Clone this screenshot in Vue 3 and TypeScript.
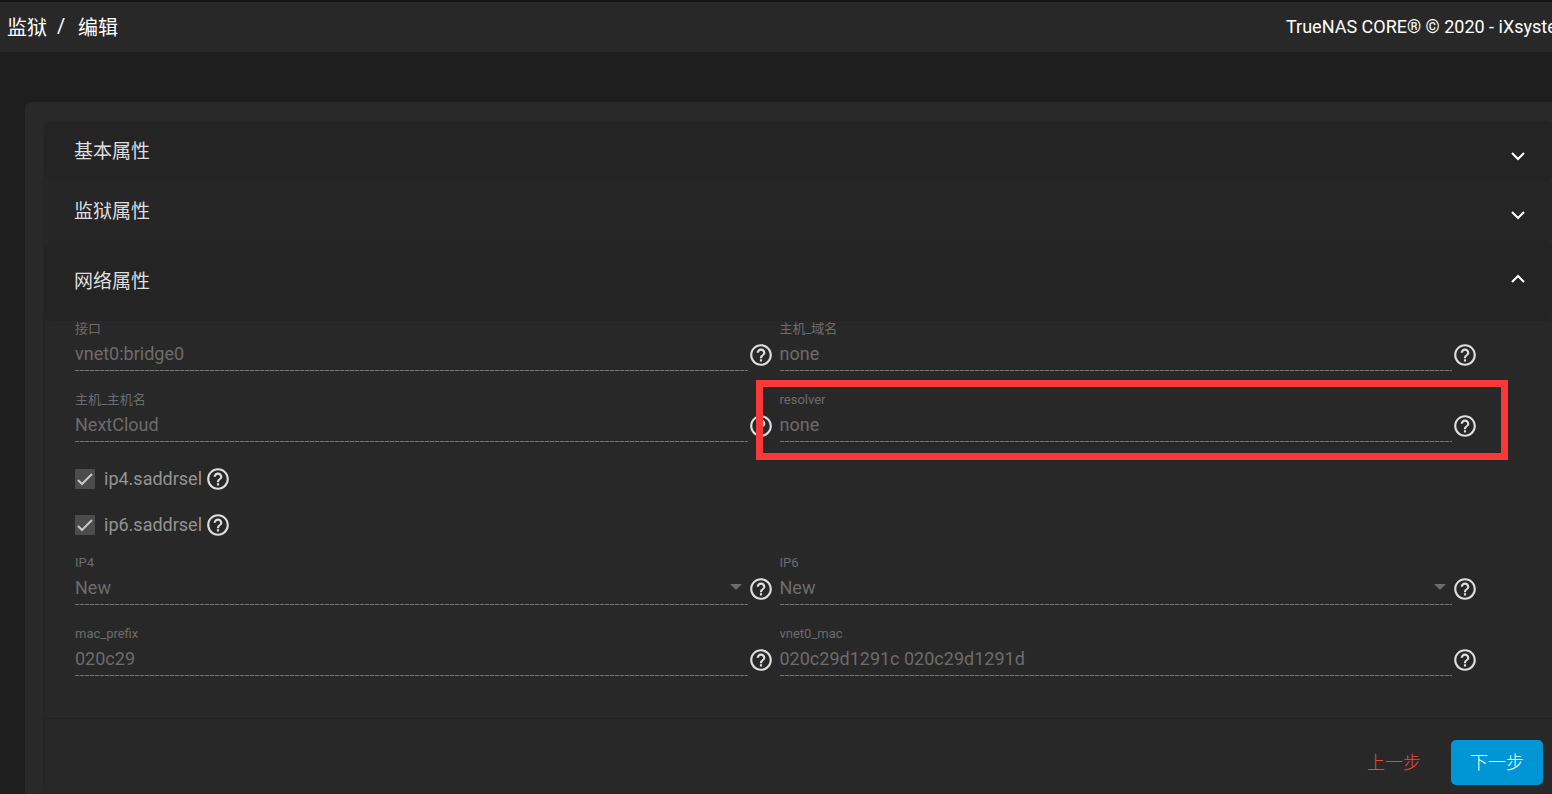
<script setup lang="ts">
interface Field {
  id: string
  label: string
  value: string
  select?: boolean
  marked?: boolean
}

const collapsed: string[] = ['基本属性', '监狱属性']

const hostFields: Field[] = [
  { id: 'interfaces', label: '接口', value: 'vnet0:bridge0' },
  { id: 'host_domainname', label: '主机_域名', value: 'none' },
  { id: 'host_hostname', label: '主机_主机名', value: 'NextCloud' },
  { id: 'resolver', label: 'resolver', value: 'none', marked: true },
]

const toggles: string[] = ['ip4.saddrsel', 'ip6.saddrsel']

const addressFields: Field[] = [
  { id: 'ip4', label: 'IP4', value: 'New', select: true },
  { id: 'ip6', label: 'IP6', value: 'New', select: true },
  { id: 'mac_prefix', label: 'mac_prefix', value: '020c29' },
  { id: 'vnet0_mac', label: 'vnet0_mac', value: '020c29d1291c 020c29d1291d' },
]

const groups = [hostFields, addressFields]

const helpPath =
  'M11 18h2v-2h-2v2zm1-16C6.480 2 2 6.480 2 12s4.480 10 10 10 10-4.480 10-10S17.520 2 12 2zm0 18c-4.410 0-8-3.590-8-8s3.590-8 8-8 8 3.590 8 8-3.590 8-8 8zm0-14c-2.210 0-4 1.790-4 4h2c0-1.100.9-2 2-2s2 .9 2 2c0 2-3 1.750-3 5h2c0-2.250 3-2.500 3-5 0-2.210-1.790-4-4-4z'
</script>

<template>
  <div class="page">
    <header class="topbar">
      <nav class="crumbs">
        <a href="#">监狱</a>
        <span class="slash">/</span>
        <a href="#">编辑</a>
      </nav>
      <span class="copyright">TrueNAS CORE® © 2020 - iXsystems</span>
    </header>

    <main class="card">
      <form class="panels" @submit.prevent>
        <button v-for="title in collapsed" :key="title" type="button" class="panel-head">
          <span>{{ title }}</span>
          <svg class="chevron" viewBox="0 0 14 14" aria-hidden="true"><path d="M1 4l6 6 6-6" /></svg>
        </button>
        <button type="button" class="panel-head open" aria-expanded="true">
          <span>网络属性</span>
          <svg class="chevron" viewBox="0 0 14 14" aria-hidden="true"><path d="M1 10l6-6 6 6" /></svg>
        </button>

        <section class="panel-body">
          <template v-for="(group, index) in groups" :key="index">
            <div class="fields">
              <div v-for="field in group" :key="field.id" class="field">
                <div class="control">
                  <label :for="field.id">{{ field.label }}</label>
                  <div class="line">
                    <select v-if="field.select" :id="field.id" disabled>
                      <option>{{ field.value }}</option>
                    </select>
                    <input v-else :id="field.id" type="text" :value="field.value" disabled />
                    <span v-if="field.select" class="arrow"></span>
                  </div>
                </div>
                <button type="button" class="help" aria-label="?">
                  <svg viewBox="0 0 24 24"><path :d="helpPath" /></svg>
                </button>
                <div v-if="field.marked" class="marker"></div>
              </div>
            </div>
            <div v-if="index === 0" class="toggles">
              <div v-for="name in toggles" :key="name" class="toggle">
                <span class="tick">
                  <input :id="name" type="checkbox" checked disabled />
                  <svg viewBox="0 0 20 20" aria-hidden="true"><path d="M3 11l4 4L17 5" /></svg>
                </span>
                <label :for="name">{{ name }}</label>
                <button type="button" class="help" aria-label="?">
                  <svg viewBox="0 0 24 24"><path :d="helpPath" /></svg>
                </button>
              </div>
            </div>
          </template>
        </section>

        <footer class="actions">
          <button type="button" class="prev">上一步</button>
          <button type="submit" class="next">下一步</button>
        </footer>
      </form>
    </main>
  </div>
</template>

<style>
body {
  background: #1e1e1e;
  overflow: hidden;
}
</style>

<style scoped>
.page {
  min-height: 100vh;
  box-sizing: border-box;
  overflow: hidden;
  font-family: Roboto, "Noto Sans CJK SC", sans-serif;
  font-size: 18px;
  color: #fff;
}
.page *,
.page *::before {
  box-sizing: border-box;
}
button,
input,
select {
  font: inherit;
  margin: 0;
  padding: 0;
  border: 0;
  background: none;
  color: inherit;
}
.topbar {
  display: flex;
  align-items: center;
  justify-content: space-between;
  height: 52px;
  padding: 0 0 2px 7px;
  border-top: 2px solid #151515;
  background: #282828;
}
.crumbs {
  display: flex;
  align-items: center;
  font-size: 20px;
}
.crumbs a {
  color: inherit;
  text-decoration: none;
}
.slash {
  width: 31px;
  padding-left: 10px;
}
.copyright {
  width: 266px;
  white-space: nowrap;
}
.card {
  margin: 50px 0 0 25px;
  padding: 20px 0 0 20px;
  border-radius: 6px 0 0 0;
  background: #292929;
}
.panels {
  border-radius: 6px 6px 0 0;
  background: #282828;
  box-shadow: 0 0 3px #1e1e1e;
}
.panel-head {
  display: flex;
  align-items: center;
  justify-content: space-between;
  width: 100%;
  height: 59px;
  padding: 0 27px 4px 29px;
  border-radius: 6px;
  background: #242424;
  color: #dedede;
  font-size: 19px;
}
.panel-head + .panel-head {
  height: 60px;
  background: #262626;
}
.panel-head.open.open {
  height: 80px;
  background: #242424;
}
.chevron {
  width: 14px;
  height: 14px;
  margin-top: 12px;
  fill: none;
  stroke: #fff;
  stroke-width: 2;
}
.open .chevron {
  margin-top: 0;
}
.panel-body {
  padding: 0 68px 21px 30px;
}
.fields {
  display: grid;
  grid-template-columns: 1fr 1fr;
}
.field {
  position: relative;
  display: flex;
  height: 71px;
}
.control {
  flex: 1;
  color: #6c6c6c;
}
.control label {
  display: block;
  height: 16px;
  font-size: 13px;
  line-height: 16px;
}
.line {
  display: flex;
  align-items: center;
  height: 34px;
  padding-bottom: 2px;
  background: repeating-linear-gradient(90deg, #747474 0 4px, #444 4px 5px) bottom / 100% 1px no-repeat;
}
.line input,
.line select {
  flex: 1;
  min-width: 0;
  height: 32px;
  color: #6c6c6c;
  opacity: 1;
  appearance: none;
}
.arrow {
  margin-right: 6px;
  border: 6px solid transparent;
  border-top-color: #6c6c6c;
  border-bottom: 0;
}
.help {
  display: flex;
  width: 26px;
  height: 26px;
}
.help svg {
  width: 26px;
  height: 26px;
  fill: #dedede;
}
.field .help {
  margin: 21px 6px 0 0;
}
.marker {
  position: absolute;
  left: -24px;
  right: -24px;
  top: -12px;
  height: 80px;
  border: 7px solid #fb3838;
  pointer-events: none;
}
.toggles {
  display: flex;
  flex-direction: column;
  gap: 14px;
  padding-bottom: 14px;
}
.toggle {
  display: flex;
  align-items: center;
  height: 32px;
  color: #949494;
}
.toggle label {
  margin: 0 3px 2px 9px;
}
.tick {
  display: grid;
  width: 20px;
  height: 20px;
}
.tick input,
.tick svg {
  grid-area: 1 / 1;
  width: 20px;
  height: 20px;
}
.tick input {
  appearance: none;
  border-radius: 1px;
  background: #4c4c4c;
}
.tick svg {
  fill: none;
  stroke: #c8c8c8;
  stroke-width: 2;
}
.actions {
  display: flex;
  align-items: center;
  justify-content: flex-end;
  gap: 30px;
  padding: 21px 9px 9px;
  border-top: 1px solid #222;
}
.prev,
.next {
  height: 45px;
  padding-bottom: 3px;
  font-weight: 300;
}
.prev {
  color: #f44336;
}
.next {
  width: 92px;
  border-radius: 5px;
  background: #0095d5;
}
</style>
